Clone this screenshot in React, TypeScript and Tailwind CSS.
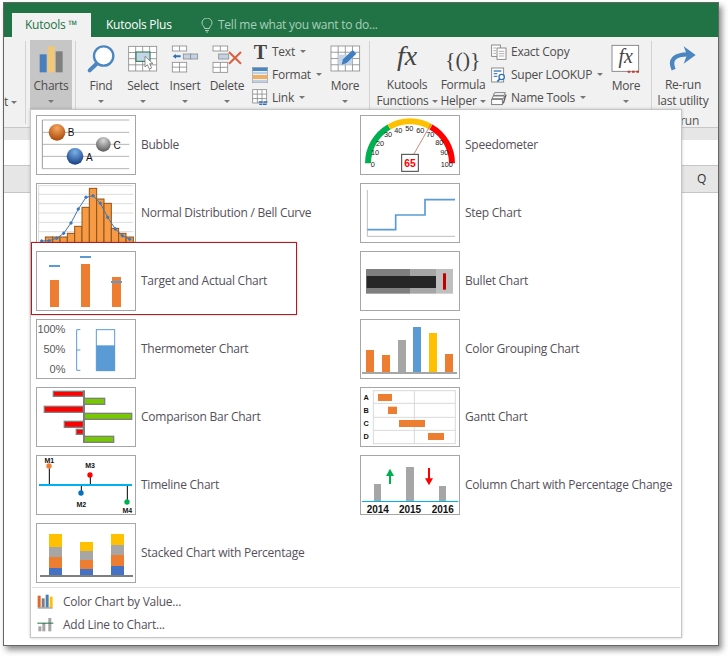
import React from "react";

const O = "#ed7d31", B = "#5b9bd5", G = "#a6a6a6", Y = "#ffc000", DB = "#4472c4";
const SERIF = "'Liberation Serif', serif";
const SANS = "'Liberation Sans', sans-serif";

function Ic({ x, y, w, h, children }: { x: number; y: number; w: number; h: number; children: React.ReactNode }) {
  return (
    <svg width={w / 3} height={h / 3} viewBox={`${x} ${y} ${w} ${h}`} className="block shrink-0 overflow-visible">
      {children}
    </svg>
  );
}

function Caret() {
  return <span className="block w-0 h-0 border-x-[3px] border-t-[3px] border-x-transparent border-t-[#777]" />;
}

function Sep() {
  return <div className="w-px self-stretch bg-[#d2d2d2] mt-[4px] mb-[3px]" />;
}

function Big({ w = 42, lines, icon, active, caretInline }: { w?: number; lines: string[]; icon: React.ReactNode; active?: boolean; caretInline?: boolean }) {
  return (
    <div style={{ width: w }} className={`h-[69px] mt-[3px] shrink-0 flex flex-col items-center ${active ? "bg-[#c6c6c6]" : ""}`}>
      <div className="h-[38px] flex items-center justify-center">{icon}</div>
      {lines.map((l, i) => (
        <div key={l} className="h-[16px] leading-[16px] flex items-center gap-[3px] whitespace-nowrap">
          {l}
          {caretInline && i === lines.length - 1 ? <Caret /> : null}
        </div>
      ))}
      {!caretInline && lines.length === 1 ? <div className="mt-[6px]"><Caret /></div> : null}
    </div>
  );
}

function Small({ icon, label, caret }: { icon: React.ReactNode; label: string; caret?: boolean }) {
  return (
    <div className="h-[23px] flex items-center gap-[4px] whitespace-nowrap">
      <div className="w-[16px] h-[18px] flex items-center justify-center">{icon}</div>
      <span>{label}</span>
      {caret ? <span className="ml-[1px]"><Caret /></span> : null}
    </div>
  );
}

const Grid = ({ x, y, w, h, cols, rows }: { x: number; y: number; w: number; h: number; cols: number; rows: number }) => (
  <g stroke="#8c8c8c" strokeWidth={2.5} fill="none">
    <rect x={x} y={y} width={w} height={h} fill="#fff" />
    {Array.from({ length: cols - 1 }).map((_, i) => (
      <line key={"c" + i} x1={x + ((i + 1) * w) / cols} x2={x + ((i + 1) * w) / cols} y1={y} y2={y + h} />
    ))}
    {Array.from({ length: rows - 1 }).map((_, i) => (
      <line key={"r" + i} y1={y + ((i + 1) * h) / rows} y2={y + ((i + 1) * h) / rows} x1={x} x2={x + w} />
    ))}
  </g>
);

const FindI = (
  <Ic x={262} y={132} w={86} h={88}>
    <circle cx={312} cy={168} r={29} fill="#fff" stroke="#4a86c0" strokeWidth={7} />
    <line x1={290} y1={192} x2={270} y2={211} stroke="#4a86c0" strokeWidth={12} strokeLinecap="round" />
  </Ic>
);
const SelectI = (
  <Ic x={386} y={136} w={90} h={84}>
    <Grid x={388} y={140} w={84} h={74} cols={4} rows={4} />
    <rect x={410} y={157} width={42} height={28} fill="#c5d5e8" stroke="#217346" strokeWidth={3} />
    <path d="M437 170 L437 202 L444 195 L450 208 L457 205 L451 192 L461 192 Z" fill="#fff" stroke="#777" strokeWidth={2.5} />
  </Ic>
);
const InsertI = (
  <Ic x={516} y={134} w={84} h={84}>
    <Grid x={520} y={137} w={43} h={15} cols={2} rows={1} />
    <path d="M521 168 L531 161 V165 H545 V171 H531 V175 Z" fill="#2f6fb5" />
    <rect x={553} y={161} width={22} height={15} fill="#c3d3e6" stroke="#8c8c8c" strokeWidth={2.5} />
    <rect x={575} y={161} width={21} height={15} fill="#c3d3e6" stroke="#8c8c8c" strokeWidth={2.5} />
    <Grid x={520} y={186} w={43} h={29} cols={2} rows={2} />
  </Ic>
);
const DeleteI = (
  <Ic x={640} y={134} w={90} h={84}>
    <Grid x={643} y={137} w={44} h={15} cols={2} rows={1} />
    <rect x={660} y={161} width={30} height={15} fill="#c3d3e6" stroke="#8c8c8c" strokeWidth={2.5} />
    <Grid x={643} y={186} w={44} h={30} cols={2} rows={2} />
    <path d="M691 155 L727 190 M727 155 L691 190" stroke="#d9603f" strokeWidth={6} />
  </Ic>
);
const MoreI = (
  <Ic x={990} y={137} w={92} h={82}>
    <Grid x={993} y={140} w={86} h={75} cols={4} rows={4} />
    <rect x={1015} y={166} width={42} height={30} fill="#c5d5e8" />
    <path d="M1025 196 L1029 180 L1058 152 L1069 163 L1040 191 Z" fill="#3f7fbf" />
  </Ic>
);
const TextI = (
  <Ic x={757} y={132} w={44} h={46}>
    <text x={779} y={176} textAnchor="middle" fontFamily={SERIF} fontWeight={700} fontSize={60} fill="#444">T</text>
  </Ic>
);
const FormatI = (
  <Ic x={756} y={197} w={48} h={48}>
    <rect x={757} y={198} width={46} height={46} fill="#fff" stroke="#8c8c8c" strokeWidth={2} />
    <rect x={758} y={199} width={44} height={10} fill="#4a86c0" />
    <rect x={758} y={211} width={44} height={8} fill="#bcd0e6" />
    <rect x={758} y={221} width={44} height={12} fill="#f0b060" />
    <rect x={758} y={235} width={44} height={8} fill="#bcd0e6" />
  </Ic>
);
const LinkI = (
  <Ic x={756} y={266} w={48} h={50}>
    <Grid x={758} y={268} w={42} h={40} cols={3} rows={3} />
    <path d="M776 305 H788 M788 312 H800 M778 312 H786 M790 305 H802" stroke="#2f6fb5" strokeWidth={4} fill="none" />
  </Ic>
);
const FxI = ({ x, y, s = 72 }: { x: number; y: number; s?: number }) => (
  <text x={x} y={y} textAnchor="middle" fontFamily={SERIF} fontStyle="italic" fontSize={s} fill="#444">fx</text>
);
const CopyI = (
  <Ic x={1} y={0} w={48} h={48}>
    <rect x={3} y={3} width={26} height={34} fill="#fff" stroke="#777" strokeWidth={2.5} />
    <rect x={19} y={12} width={27} height={34} fill="#fff" stroke="#777" strokeWidth={2.5} />
    <path d="M24 22 H41 M24 29 H41 M24 36 H41 M8 12 H16 M8 20 H16 M8 28 H16" stroke="#888" strokeWidth={2} />
  </Ic>
);
const LookupI = (
  <Ic x={1} y={0} w={50} h={48}>
    <rect x={3} y={3} width={36} height={42} fill="#fff" stroke="#777" strokeWidth={2.5} />
    <path d="M9 12 H32 M9 20 H20 M9 28 H20" stroke="#4a86c0" strokeWidth={4} />
    <circle cx={33} cy={30} r={8} fill="#fff" stroke="#2f6fb5" strokeWidth={4} />
    <line x1={27} y1={36} x2={20} y2={44} stroke="#2f6fb5" strokeWidth={5} />
  </Ic>
);
const NameI = (
  <Ic x={1} y={0} w={50} h={48}>
    <path d="M12 8 H44 L40 16 H8 Z M8 18 H42 L38 26 H4 Z" fill="#fff" stroke="#666" strokeWidth={2.5} />
    <rect x={3} y={28} width={32} height={16} fill="#fff" stroke="#666" strokeWidth={2.5} />
    <path d="M38 40 L46 14" stroke="#555" strokeWidth={4} />
  </Ic>
);

function Thumb({ x, y, children }: { x: number; y: number; children: React.ReactNode }) {
  return (
    <div className="w-[100px] h-[60px] shrink-0 border border-[#a6a6a6] bg-white">
      <svg width={98} height={58} viewBox={`${x + 3} ${y + 3} 294 174`} className="block">{children}</svg>
    </div>
  );
}

const Sphere = ({ id, c, d, cx, cy, r }: { id: string; c: string; d: string; cx: number; cy: number; r: number }) => (
  <>
    <defs>
      <radialGradient id={id} cx="50%" cy="25%" r="75%">
        <stop offset="0%" stopColor={c} />
        <stop offset="100%" stopColor={d} />
      </radialGradient>
    </defs>
    <circle cx={cx} cy={cy} r={r} fill={`url(#${id})`} />
  </>
);

const Lbl = ({ x, y, s = 30, t, w = 400, c = "#111", f = SANS, a = "middle" }: { x: number; y: number; s?: number; t: string; w?: number; c?: string; f?: string; a?: "middle" | "end" | "start" }) => (
  <text x={x} y={y} fontSize={s} fontWeight={w} fill={c} fontFamily={f} textAnchor={a}>{t}</text>
);

const R = ({ x, y, x2, y2, c, st, sw }: { x: number; y: number; x2: number; y2: number; c: string; st?: string; sw?: number }) => (
  <rect x={x} y={y} width={x2 - x} height={y2 - y} fill={c} stroke={st} strokeWidth={sw} />
);

const Bubble = (
  <Thumb x={48} y={15}>
    {[30, 67, 103, 139, 176].map((y) => <line key={y} x1={67} x2={328} y1={y} y2={y} stroke="#b5b5b5" strokeWidth={3} />)}
    <line x1={67} x2={67} y1={30} y2={176} stroke="#9a9a9a" strokeWidth={3} />
    <Sphere id="sb" c="#f7a860" d="#a8480a" cx={111} cy={67} r={25} />
    <Sphere id="sc" c="#d8d8d8" d="#5a5a5a" cx={250} cy={103} r={22} />
    <Sphere id="sa" c="#7ab0ea" d="#173f80" cx={165} cy={139} r={25} />
    <Lbl x={153} y={78} t="B" />
    <Lbl x={291} y={116} t="C" />
    <Lbl x={208} y={153} t="A" />
  </Thumb>
);

const bellTops = [381, 381, 381, 370, 349, 292, 235, 267, 280, 355, 370, 381];
const bellPts = "65,393 87,392 110,385 131,370 153,339 175,297 198,262 219,257 241,280 263,322 286,357 307,377 329,388";
const Bell = (
  <Thumb x={48} y={219}>
    <line x1={56} x2={56} y1={225} y2={393} stroke="#ddd" strokeWidth={3} />
    {[227, 253, 281, 309, 337, 365].map((y) => <line key={y} x1={56} x2={340} y1={y} y2={y} stroke="#ddd" strokeWidth={3} />)}
    {bellTops.map((t, i) => (
      <rect key={i} x={76 + i * 22} y={t} width={22} height={400 - t} fill="#f79a45" stroke="#8f5215" strokeWidth={3} />
    ))}
    <polyline points={bellPts} fill="none" stroke="#3f78b8" strokeWidth={3} />
    {bellPts.split(" ").map((p) => {
      const [x, y] = p.split(",").map(Number);
      return <path key={p} d={`M${x - 6} ${y} L${x} ${y - 6} L${x + 6} ${y} L${x} ${y + 6} Z`} fill="#3f78b8" />;
    })}
  </Thumb>
);

const TargetT = (
  <Thumb x={48} y={423}>
    <R x={90} y={510} x2={117} y2={591} c={O} />
    <R x={183} y={462} x2={210} y2={591} c={O} />
    <R x={276} y={501} x2={303} y2={591} c={O} />
    <R x={87} y={465} x2={120} y2={471} c={B} />
    <R x={180} y={438} x2={213} y2={444} c={B} />
    <R x={273} y={513} x2={306} y2={519} c={B} />
  </Thumb>
);

const Thermo = (
  <Thumb x={48} y={12}>
    <Lbl x={136} y={54} s={33} t="100%" c="#595959" a="end" />
    <Lbl x={136} y={114} s={33} t="50%" c="#595959" a="end" />
    <Lbl x={136} y={174} s={33} t="0%" c="#595959" a="end" />
    <path d="M181 44 H170 V166 H181 M170 105 H181" fill="none" stroke={B} strokeWidth={3} />
    <rect x={229} y={44} width={55} height={123} fill="#fff" stroke={B} strokeWidth={3} />
    <R x={229} y={91} x2={285} y2={168} c={B} />
  </Thumb>
);

const Comparison = (
  <Thumb x={48} y={216}>
    {[
      [100, 229, 190, 244, "#ff0000"],
      [192, 250, 254, 268, "#76c800"],
      [73, 274, 190, 292, "#ff0000"],
      [192, 295, 335, 313, "#76c800"],
      [133, 319, 190, 337, "#ff0000"],
      [169, 343, 190, 358, "#ff0000"],
      [192, 364, 281, 382, "#76c800"],
    ].map((b, i) => (
      <R key={i} x={b[0] as number} y={b[1] as number} x2={b[2] as number} y2={b[3] as number} c={b[4] as string} st="#7f7f7f" sw={4} />
    ))}
    <R x={189} y={226} x2={195} y2={384} c="#7f7f7f" />
  </Thumb>
);

const Timeline = (
  <Thumb x={48} y={420}>
    <path d="M88 460 V510 M184 510 V535 M211 485 V510 M322 510 V560" stroke="#000" strokeWidth={3} />
    <R x={57} y={507} x2={336} y2={513} c="#00b0f0" />
    <circle cx={87} cy={453} r={8} fill={O} />
    <circle cx={183} cy={534} r={8} fill="#0070c0" />
    <circle cx={210} cy={480} r={8} fill="#ff0000" />
    <circle cx={321} cy={561} r={8} fill="#00b050" />
    <Lbl x={88} y={443} s={21} w={700} t="M1" />
    <Lbl x={210} y={459} s={21} w={700} t="M3" />
    <Lbl x={184} y={575} s={21} w={700} t="M2" />
    <Lbl x={322} y={593} s={21} w={700} t="M4" />
  </Thumb>
);

const Stacked = (
  <Thumb x={108} y={24}>
    {[
      [147, 159, 126, 96, 57],
      [240, 162, 135, 108, 81],
      [333, 153, 120, 90, 57],
    ].map((b) => (
      <g key={b[0]}>
        <R x={b[0]} y={b[1]} x2={b[0] + 39} y2={180} c={DB} />
        <R x={b[0]} y={b[2]} x2={b[0] + 39} y2={b[1]} c={O} />
        <R x={b[0]} y={b[3]} x2={b[0] + 39} y2={b[2]} c={G} />
        <R x={b[0]} y={b[4]} x2={b[0] + 39} y2={b[3]} c={Y} />
      </g>
    ))}
    <R x={120} y={180} x2={399} y2={186} c="#7f7f7f" />
  </Thumb>
);

const Speedo = (
  <Thumb x={30} y={15}>
    <path d="M54 160 A126 126 0 0 1 117 51" fill="none" stroke="#00b050" strokeWidth={18} />
    <path d="M117 51 A126 126 0 0 1 243 51" fill="none" stroke={Y} strokeWidth={18} />
    <path d="M243 51 A126 126 0 0 1 306 160" fill="none" stroke="#ff0000" strokeWidth={18} />
    {[
      ["0", 68, 172], ["10", 75, 136], ["20", 90, 107], ["30", 114, 82], ["40", 145, 68], ["50", 178, 62],
      ["60", 211, 68], ["70", 241, 81], ["80", 268, 106], ["90", 283, 136], ["100", 290, 172],
    ].map((l) => <Lbl key={l[0] as string} x={l[1] as number} y={l[2] as number} s={22} c="#222" t={l[0] as string} />)}
    <line x1={190} y1={135} x2={243} y2={42} stroke="#c87060" strokeWidth={2.5} />
    <rect x={155} y={133} width={50} height={51} fill="#fff" stroke="#404040" strokeWidth={3} />
    <Lbl x={180} y={170} s={31} w={700} c="#ff0000" t="65" />
  </Thumb>
);

const Step = (
  <Thumb x={30} y={219}>
    <path d="M52 240 V379 H315" fill="none" stroke="#bfbfbf" strokeWidth={3} />
    <path d="M52 359 H137 V315 H225 V269 H315" fill="none" stroke={B} strokeWidth={5} />
  </Thumb>
);

const Bullet = (
  <Thumb x={30} y={423}>
    <R x={48} y={477} x2={180} y2={551} c="#7f7f7f" />
    <R x={180} y={477} x2={258} y2={551} c="#a6a6a6" />
    <R x={258} y={477} x2={309} y2={551} c="#bfbfbf" />
    <R x={50} y={498} x2={258} y2={534} c="#262626" />
    <R x={279} y={490} x2={288} y2={539} c="#c00000" />
  </Thumb>
);

const ColorG = (
  <Thumb x={30} y={12}>
    <R x={48} y={105} x2={72} y2={172} c={O} />
    <R x={96} y={120} x2={120} y2={172} c={O} />
    <R x={144} y={75} x2={168} y2={172} c={G} />
    <R x={189} y={36} x2={213} y2={172} c={B} />
    <R x={237} y={54} x2={261} y2={172} c={Y} />
    <R x={285} y={117} x2={309} y2={172} c={O} />
    <R x={36} y={171} x2={321} y2={177} c={G} />
  </Thumb>
);

const Gantt = (
  <Thumb x={30} y={216}>
    <rect x={70} y={227} width={246} height={159} fill="none" stroke="#d9d9d9" strokeWidth={3} />
    <path d="M70 265 H316 M70 307 H316 M70 346 H316 M193 227 V386" stroke="#d9d9d9" strokeWidth={3} />
    {[["A", 255], ["B", 293], ["C", 332], ["D", 371]].map((l) => (
      <Lbl key={l[0] as string} x={48} y={l[1] as number} s={22} w={700} t={l[0] as string} />
    ))}
    <R x={84} y={237} x2={126} y2={258} c={O} />
    <R x={114} y={275} x2={141} y2={297} c={O} />
    <R x={147} y={315} x2={225} y2={336} c={O} />
    <R x={234} y={354} x2={282} y2={375} c={O} />
  </Thumb>
);

const ColumnP = (
  <Thumb x={30} y={420}>
    <R x={72} y={507} x2={93} y2={558} c={G} />
    <R x={168} y={456} x2={192} y2={558} c={G} />
    <R x={267} y={513} x2={288} y2={558} c={G} />
    <R x={36} y={558} x2={325} y2={561} c="#00b0f0" />
    <path d="M120 461 L108 483 H117 V507 H123 V483 H132 Z" fill="#00b050" />
    <path d="M234 459 H240 V490 H249 L237 511 L225 490 H234 Z" fill="#ff0000" />
    <Lbl x={83} y={594} s={30} w={700} t="2014" />
    <Lbl x={180} y={594} s={30} w={700} t="2015" />
    <Lbl x={278} y={594} s={30} w={700} t="2016" />
  </Thumb>
);

const left: [React.ReactNode, string][] = [
  [Bubble, "Bubble"],
  [Bell, "Normal Distribution / Bell Curve"],
  [TargetT, "Target and Actual Chart"],
  [Thermo, "Thermometer Chart"],
  [Comparison, "Comparison Bar Chart"],
  [Timeline, "Timeline Chart"],
  [Stacked, "Stacked Chart with Percentage"],
];
const right: [React.ReactNode, string][] = [
  [Speedo, "Speedometer"],
  [Step, "Step Chart"],
  [Bullet, "Bullet Chart"],
  [ColorG, "Color Grouping Chart"],
  [Gantt, "Gantt Chart"],
  [ColumnP, "Column Chart with Percentage Change"],
];

function Col({ items }: { items: [React.ReactNode, string][] }) {
  return (
    <div className="flex flex-col gap-[8px]">
      {items.map(([t, l]) => (
        <div key={l} className="flex items-center gap-[5px] h-[60px]">
          {t}
          <span className="whitespace-nowrap">{l}</span>
        </div>
      ))}
    </div>
  );
}

export default function App() {
  return (
    <div className="w-[728px] h-[656px] bg-white pl-[3px] pt-[2px] overflow-hidden font-['Open_Sans',sans-serif] text-[12px] text-[#4c4c4c] tracking-[-0.25px]">
      <div className="relative w-[716px] h-[644px] border border-[#666] bg-white shadow-[3px_4px_6px_rgba(0,0,0,0.45)] flex flex-col">
        {/* Title / tabs */}
        <div className="h-[34px] bg-[#217346] flex items-end pl-[8px] shrink-0">
          <div className="w-[79px] h-[24px] bg-[#f1f1f1] text-[#217346] flex items-center pl-[13px]">Kutools ™</div>
          <div className="w-[110px] h-[24px] text-white flex items-center pl-[15px]">Kutools Plus</div>
          <div className="h-[24px] flex items-center gap-[5px] text-[#a9cfb9]">
            <svg width="12" height="15" viewBox="0 0 24 30" fill="none" stroke="#a9cfb9" strokeWidth="2">
              <path d="M7 21 C7 16 2 15 2 10 A10 10 0 0 1 22 10 C22 15 17 16 17 21 Z" />
              <path d="M8 25 H16 M10 28 H14" />
            </svg>
            <span>Tell me what you want to do...</span>
          </div>
        </div>

        {/* Ribbon */}
        <div className="h-[91px] bg-[#f1f1f1] flex shrink-0 border-b border-[#c8c8c8]">
          <div className="w-[21px] shrink-0 pt-[52px] flex items-center h-[78px] gap-[3px] overflow-hidden"><span>t</span><Caret /></div>
          <Sep />
          <div className="w-[4px] shrink-0" />
          <Big active lines={["Charts"]} icon={
            <Ic x={115} y={134} w={74} h={84}>
              <R x={117} y={162} x2={138} y2={216} c="#4a7ebb" />
              <R x={141} y={138} x2={162} y2={216} c="#f0c878" />
              <R x={165} y={153} x2={186} y2={216} c="#7f7f7f" />
            </Ic>
          } />
          <div className="w-[3px] shrink-0" />
          <Sep />
          <div className="w-[4px] shrink-0" />
          <Big lines={["Find"]} icon={FindI} />
          <Big lines={["Select"]} icon={SelectI} />
          <Big lines={["Insert"]} icon={InsertI} />
          <Big lines={["Delete"]} icon={DeleteI} />
          <div className="w-[72px] shrink-0 pl-[4px] pt-[3px]">
            <Small icon={TextI} label="Text" caret />
            <Small icon={FormatI} label="Format" caret />
            <Small icon={LinkI} label="Link" caret />
          </div>
          <div className="w-[4px] shrink-0" />
          <Big lines={["More"]} icon={MoreI} />
          <div className="w-[3px] shrink-0" />
          <Sep />
          <div className="w-[9px] shrink-0" />
          <Big w={56} lines={["Kutools", "Functions"]} caretInline icon={
            <Ic x={90} y={130} w={84} h={90}><FxI x={132} y={192} s={84} /></Ic>
          } />
          <Big w={56} lines={["Formula", "Helper"]} caretInline icon={
            <Ic x={250} y={135} w={100} h={78}>
              <text x={300} y={198} textAnchor="middle" fontFamily={SERIF} fontSize={66} fill="#444">{"{()}"}</text>
            </Ic>
          } />
          <div className="w-[114px] shrink-0 pt-[3px]">
            <Small icon={CopyI} label="Exact Copy" />
            <Small icon={LookupI} label="Super LOOKUP" caret />
            <Small icon={NameI} label="Name Tools" caret />
          </div>
          <Big lines={["More"]} icon={
            <Ic x={742} y={132} w={92} h={88}>
              <rect x={745} y={136} width={80} height={78} fill="#fff" stroke="#777" strokeWidth={2.5} />
              <FxI x={786} y={190} s={60} />
              <path d="M792 215 H830" stroke="#c0392b" strokeWidth={6} strokeDasharray="8 5" />
            </Ic>
          } />
          <div className="w-[4px] shrink-0" />
          <Sep />
          <div className="w-[3px] shrink-0" />
          <div className="w-[56px] shrink-0 relative">
            <Big w={56} lines={["Re-run", "last utility"]} icon={
              <Ic x={918} y={136} w={84} h={80}>
                <path d="M932 210 C918 180 935 164 975 164" fill="none" stroke="#4a86c0" strokeWidth={13} />
                <path d="M962 140 L998 166 L962 192 L972 166 Z" fill="#4a86c0" />
              </Ic>
            } />
            <div className="absolute right-[12px] top-[75px] text-[#555]">run</div>
          </div>
        </div>

        {/* Formula bar strip and column header */}
        <div className="h-[12px] bg-[#e6e6e6] shrink-0" />
        <div className="h-[25px] bg-white shrink-0" />
        <div className="h-[28px] bg-[#e6e6e6] border-y border-[#c6c6c6] shrink-0 flex items-center justify-end pr-[12px] text-[#333]">Q</div>
        <div className="flex-1 bg-white" />

        {/* Charts menu */}
        <div className="absolute left-[26px] top-[106px] w-[652px] h-[529px] bg-white border border-[#c6c6c6] shadow-[0_0_3px_rgba(0,0,0,0.2)] flex flex-col text-[#55505a]">
          <div className="grid grid-cols-[324px_324px] pl-[5px] pt-[5px]">
            <Col items={left} />
            <Col items={right} />
          </div>
          <div className="mt-[4px] mx-[1px] h-px bg-[#e2e2e2]" />
          <div className="mt-[2px]">
            <div className="h-[23px] flex items-center pl-[6px]">
              <div className="w-[26px]">
                <Ic x={109} y={235} w={50} h={44}>
                  <R x={111} y={240} x2={120} y2={275} c="#e0662a" />
                  <R x={123} y={248} x2={132} y2={275} c="#7f7f7f" />
                  <R x={135} y={237} x2={144} y2={275} c="#4a7ebb" />
                  <R x={147} y={243} x2={156} y2={275} c={Y} />
                  <R x={111} y={276} x2={156} y2={278} c="#444" />
                </Ic>
              </div>
              <span>Color Chart by Value...</span>
            </div>
            <div className="h-[23px] flex items-center pl-[6px]">
              <div className="w-[26px]">
                <Ic x={107} y={307} w={50} h={44}>
                  <R x={111} y={335} x2={120} y2={350} c="#a6a6a6" />
                  <R x={123} y={325} x2={132} y2={350} c="#a6a6a6" />
                  <R x={141} y={310} x2={150} y2={350} c="#a6a6a6" />
                  <R x={108} y={324} x2={156} y2={327} c="#217346" />
                </Ic>
              </div>
              <span>Add Line to Chart...</span>
            </div>
          </div>
          {/* Highlight box */}
          <div className="absolute left-0 top-[132px] w-[266px] h-[73px] border border-[#b01c24] shadow-[0_0_2px_rgba(120,0,0,0.3)]" />
        </div>
      </div>
    </div>
  );
}
